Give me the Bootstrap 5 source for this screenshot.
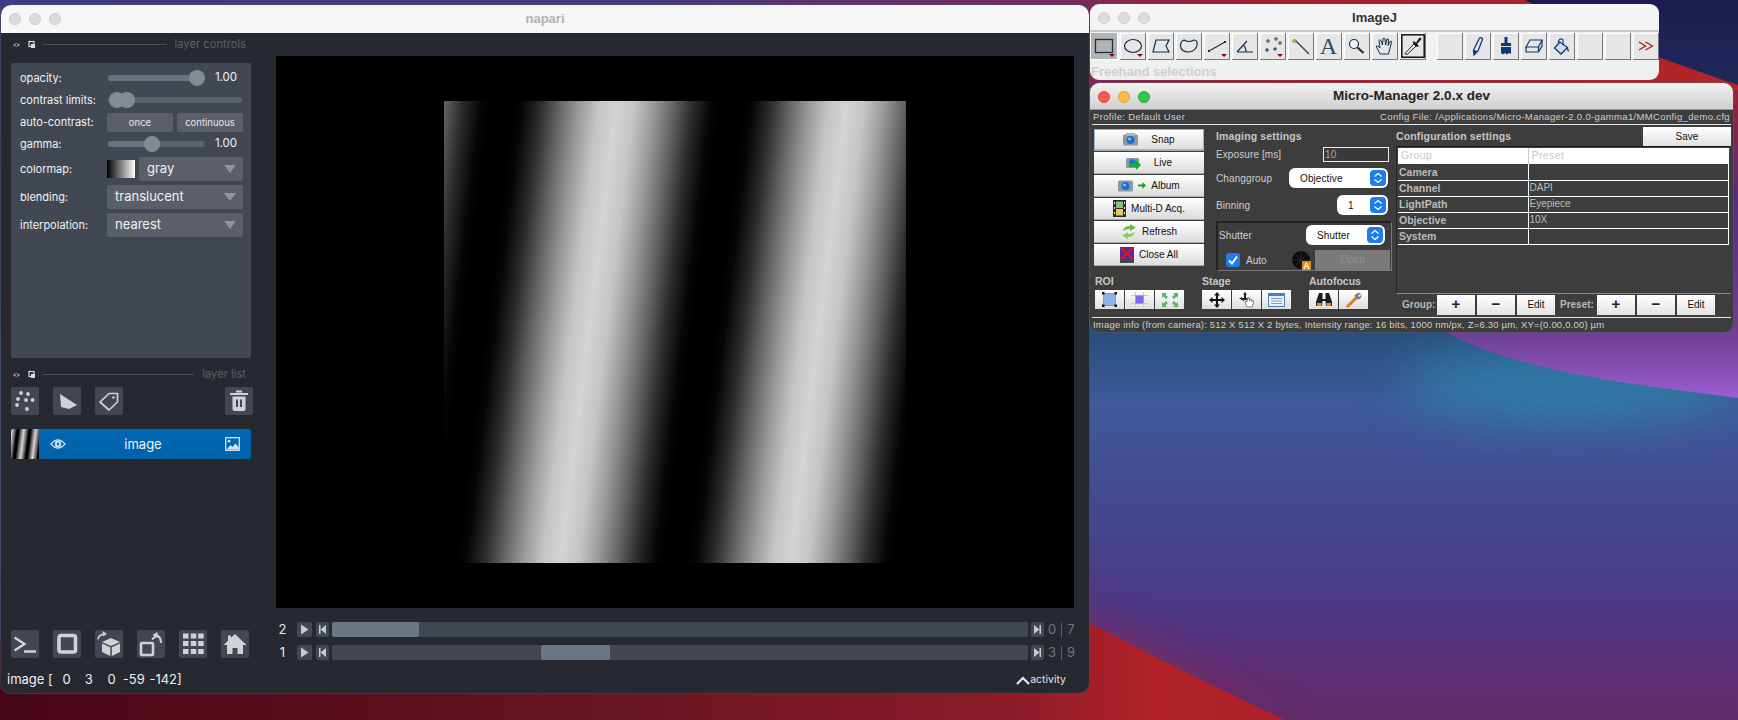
<!DOCTYPE html>
<html lang="en">
<head>
<meta charset="UTF-8">
<title>napari, ImageJ and Micro-Manager</title>
<link rel="stylesheet" href="https://cdn.jsdelivr.net/npm/bootstrap@5.3.0/dist/css/bootstrap.min.css">
<style>
html,body{margin:0;background:#222}
.desk{position:relative;width:1738px;height:720px;overflow:hidden}
.wall{position:absolute;left:0;top:0}
.win{position:absolute;overflow:hidden}
.lights{position:absolute;left:8px;top:8px;display:flex;gap:8px}
.lights i{display:block;width:12px;height:12px;border-radius:50%;background:#dcdcdc;border:1px solid #cbcbcb}
.lights.on i:nth-child(1){background:#fc5753;border-color:#df4744}
.lights.on i:nth-child(2){background:#fdbc40;border-color:#de9f34}
.lights.on i:nth-child(3){background:#33c748;border-color:#27aa35}

/* napari */
.np{left:1px;top:5px;width:1088px;height:688px;border-radius:10px;background:#262930;display:flex;flex-direction:column;font-family:Inter,"Noto Sans",sans-serif;color:#f0f1f2;box-shadow:0 0 0 1px rgba(70,75,80,.6)}
.np-title{position:relative;height:28px;flex:none;background:#f6f6f6;text-align:center;font:bold 13px/27px "Liberation Sans",sans-serif;color:#b2b2b2}
.np-body{height:631px;flex:none;display:flex}
.np-dock{width:275px;flex:none;display:flex;flex-direction:column;padding-bottom:6px}
.dock-head{height:30px;display:flex;align-items:center;padding:0 0 7px 11px;font-size:11.2px;color:#5b5f66}
.dock-head.lower{height:29px;padding:4px 0 0 11px}
.dock-head .rule{flex:1;height:1px;background:#4a4e55;margin:0 8px 0 7px}
.dock-head span{padding-right:30px}
.ctl-panel{margin-left:10px;width:240px;height:295px;background:#414851;border-radius:2px;padding:4px 8px 0 9px;display:grid;grid-template-columns:87px 136px;grid-template-rows:22px 22px 22px 22px 28px 28px 28px;align-items:center;font-size:11px}
.ctl-track{position:relative;height:6px;background:#5a626c;border-radius:3px;margin-left:1px}
.ctl-fill{position:absolute;left:0;top:0;height:6px;background:#6a7480;border-radius:3px}
.ctl-knob{position:absolute;top:-5px;width:16px;height:16px;margin-left:-8px;border-radius:50%;background:#838b93}
.ctl-val{width:38px;font-size:11.5px;text-align:center;padding-left:4px}
.ctl-btn{flex:1;height:19px;background:#5a5f68;border-radius:2px;font-size:9.5px;line-height:19px;text-align:center;color:#e6e7e8}
.ctl-combo{height:24px;background:#5a5f68;border-radius:2px;display:flex;align-items:center;font-size:13px;padding-left:8px;position:relative}
.ctl-combo::after{content:"";position:absolute;right:7px;top:8px;border-left:6px solid transparent;border-right:6px solid transparent;border-top:8px solid #8f959c}
.cmap{width:28px;height:18px;background:linear-gradient(90deg,#000,#fff)}
.np-btn{width:28px;height:28px;flex:none;background:#414851;border-radius:2px;display:block}
.layer-row{margin:14px 0 0 10px;width:240px;height:30px;display:flex;border-radius:2px;overflow:hidden;font-size:13px;color:#eef3f8}
.layer-thumb{width:28px;height:30px;flex:none;display:block}
.layer-main{flex:1;background:linear-gradient(#0068b4,#0062aa);display:flex;align-items:center;position:relative;justify-content:center;padding:2px 4px 0 0}
.np-center{flex:1;padding:23px 15px 0 0}
.np-canvas{display:block;width:798px;height:552px;background:#000}
.dim-row{display:flex;align-items:center;height:15px;font-size:13px;margin-top:8px}
.dim-row:first-of-type{margin-top:14px}
.dim-name{width:13px;text-align:center;color:#e6e7e8;margin-right:8px}
.dim-btn{height:15px;background:#414851;border-radius:2px;display:block;flex:none}
.dim-track{flex:1;height:15px;background:#414851;border-radius:2px;margin:0 3px;position:relative}
.dim-thumb{position:absolute;top:0;height:15px;background:#6a7683;border-radius:2px}
.dim-nums{width:26px;margin-left:4px;display:flex;align-items:center;color:#72767c;font-size:13px;gap:5px}
.dim-nums b{display:block;width:1px;height:14px;flex:none;background:#5e626a}
.np-status{flex:1;display:flex;align-items:center;padding:3px 23px 0 6px;font-size:13px;color:#f0f1f2}
.st-num{display:inline-block;text-align:right}
.np-activity{margin-left:auto;display:flex;align-items:center;font-size:10.5px;color:#e6e7e8}

/* ImageJ */
.ij{left:1090px;top:4px;width:569px;height:76px;border-radius:9px;background:linear-gradient(#f5f5f5,#efefef);font-family:"Liberation Sans",sans-serif}
.ij-title{position:relative;height:28px;border-bottom:2px solid #c9c9c9;text-align:center;font:bold 13px/27px "Liberation Sans",sans-serif;color:#333}
.ij-tools{display:flex;height:28px;padding:1px 0 0 2px;gap:2px}
.ij-tool{position:relative;width:26px;height:27px;flex:none;background:#e6e6e6;border-right:1px solid #777;border-bottom:1px solid #777;box-shadow:inset 1px 1px 0 #fff;display:flex;align-items:center;justify-content:center;font:24px/1 "Liberation Serif",serif;color:#2b4a68}
.ij-tool.sel{background:#b3b3b3;box-shadow:none;border-color:#fff;width:27px;margin-left:-1px}
.ij-tool.gapl{margin-left:9px}
.ij-tool.menu::after{content:"";position:absolute;right:2px;bottom:2px;border-left:3px solid transparent;border-right:3px solid transparent;border-top:3px solid #8a0010}
.ij-msg{padding:3px 0 0 1px;font:bold 13px/17px "Liberation Sans",sans-serif;color:#cfcfcf}

/* Micro-Manager */
.mm{left:1090px;top:83px;width:643px;height:249px;border-radius:9px;background:#3d3d3d;font-family:"Liberation Sans",sans-serif;color:#cfcfcf;font-size:10px;box-shadow:0 0 0 1px rgba(90,90,90,.5)}
.mm-title{position:relative;height:27px;background:linear-gradient(#f2f2f2,#cfcfcf);text-align:center;font:bold 13.5px/25px "Liberation Sans",sans-serif;color:#222;border-bottom:1px solid #999}
.mm-head{height:15px;margin:0 2px;display:flex;align-items:center;border-bottom:1px solid #e6e6e6;padding:0 1px;line-height:14px;font-size:9.5px;letter-spacing:.34px}
.mm-head span:last-child{margin-left:auto}
.mm-main{display:flex;gap:4px;padding:1px 0 0 4px}
.mm-left{width:298px;flex:none;padding-top:2px}
.mm-top{display:flex;gap:12px;height:145px}
.mm-actions{width:110px;flex:none;display:flex;flex-direction:column;gap:1px;padding-top:1px}
.mm-act{height:22px;background:linear-gradient(#fff,#dcdcdc);border-bottom:1px solid #aaa;display:flex;align-items:center;justify-content:center;gap:5px;color:#111;font-size:10px}
.mm-act.cur{box-shadow:inset 0 0 0 1px #8db7dc}
.mm-imaging{flex:1}
.mm-h{font-weight:bold;font-size:10.5px;color:#c8c8c8;letter-spacing:.15px}
.mm-line{display:flex;align-items:center;height:20px;letter-spacing:.1px}
.mm-input{margin-left:auto;margin-right:3px;width:66px;height:15px;border:1px solid #eee;background:#3a3a3a;color:#a8a8a8;line-height:13px;padding-left:1px;font-size:10px}
.mm-sel{margin-left:auto;height:20px;background:#fff;border-radius:6px;display:flex;align-items:center;color:#111;position:relative;padding-left:11px;font-size:10px}
.mm-step{position:absolute;right:2px;top:2px;width:16px;height:16px;display:block}
.mm-shut{border:1px solid #222;border-right-color:#777;border-bottom-color:#777;border-width:2px 1px 1px 2px;height:50px;margin-top:6px;width:176px;padding:2px 1px 0}
.mm-check{width:14px;height:14px;display:block;flex:none;margin-left:7px}
.mm-open{width:75px;height:20px;background:#7a7a7a;color:#909090;text-align:center;line-height:20px;font-size:10px}
.mm-tools{display:flex;gap:18px;padding-left:1px}
.mm-tgroup{width:90px;font-weight:bold;font-size:10.5px;line-height:17px;color:#c8c8c8}
.mm-tbtns{display:flex;gap:1px}
.mm-tbtn{width:29px;height:19px;background:linear-gradient(#fff,#dedede);display:flex;align-items:center;justify-content:center;flex:none}
.mm-right{width:335px;flex:none}
.mm-confhead{display:flex;align-items:center;height:19px;margin-top:1px}
.mm-save{margin-left:auto;width:88px;height:19px;background:linear-gradient(#fff,#e0e0e0);color:#111;text-align:center;line-height:19px;font-size:10px}
.mm-gridbox{height:148px;border-top:1px solid #1d1d1d;border-left:1px solid #262626;border-bottom:1px solid #8a8a8a;padding:1px 1px 0 1px}
.mm-grid{width:331px;border-collapse:collapse;table-layout:fixed;font-size:10px}
.mm-grid th{height:16px;background:#fff;color:#c9c9c9;font-weight:normal;font-size:10.5px;padding:0 3px;letter-spacing:.4px}
.mm-grid th+th{border-left:1px solid #ccc}
.mm-grid td{height:16px;padding:0 1px;border-bottom:1px solid #fff;line-height:14px;color:#bdbdbd}
.mm-grid td:first-child{font-weight:bold;font-size:10.5px;color:#bcbcbc}
.mm-grid td+td{border-left:1px solid #fff;border-right:1px solid #fff}
.mm-edits{display:flex;align-items:center;height:21px;padding-left:6px;gap:2px;font-weight:bold;font-size:10px;color:#b8b8b8}
.mm-edit{width:38px;height:20px;background:linear-gradient(#fff,#e2e2e2);color:#111;font-weight:normal;text-align:center;line-height:19px;flex:none}
.mm-edit.sym{font-size:15px;line-height:18px;font-weight:bold;color:#222}
.mm-info{margin:2px 2px 0;border-top:1px solid #e6e6e6;padding:0 1px;line-height:14px;font-size:9.5px;color:#cfcfcf;letter-spacing:.19px;white-space:nowrap}
</style>
</head>
<body>
<div class="desk">

<!-- wallpaper -->
<svg class="wall" width="1738" height="720" viewBox="0 0 1738 720">
  <defs>
    <linearGradient id="wBase" x1="0" y1="0" x2="0" y2="1">
      <stop offset="0" stop-color="#1d1c50"/><stop offset=".46" stop-color="#274f7a"/><stop offset=".56" stop-color="#3f5a9a"/><stop offset=".7" stop-color="#44498f"/><stop offset=".84" stop-color="#4c3a85"/><stop offset=".92" stop-color="#5a3078"/><stop offset="1" stop-color="#622c68"/>
    </linearGradient>
    <linearGradient id="wRed" gradientUnits="userSpaceOnUse" x1="0" y1="0" x2="1280" y2="0">
      <stop offset="0" stop-color="#470718"/><stop offset=".5" stop-color="#6a1522"/><stop offset=".8" stop-color="#8e1c28"/><stop offset=".9" stop-color="#b22228"/><stop offset="1" stop-color="#b02028"/>
    </linearGradient>
    <linearGradient id="wTop" x1="0" y1="0" x2="1" y2="0">
      <stop offset="0" stop-color="#3f3a86"/><stop offset=".35" stop-color="#443a84"/><stop offset=".62" stop-color="#7a2a5a"/><stop offset=".72" stop-color="#a22030"/><stop offset="1" stop-color="#b52428"/>
    </linearGradient>
    <linearGradient id="wPurple" gradientUnits="userSpaceOnUse" x1="0" y1="90" x2="0" y2="398">
      <stop offset="0" stop-color="#a02030"/><stop offset=".35" stop-color="#5a2a80"/><stop offset=".78" stop-color="#6a3f90"/><stop offset="1" stop-color="#9c5dd2"/>
    </linearGradient>
    <filter id="wSoft" x="-30%" y="-60%" width="160%" height="220%"><feGaussianBlur stdDeviation="24"/></filter>
  </defs>
  <rect width="1738" height="720" fill="url(#wBase)"/>
  <path d="M0,0H1525C1580,30 1650,55 1738,85V130H0Z" fill="url(#wTop)"/>
  <ellipse cx="1570" cy="385" rx="170" ry="38" fill="#2f80a8" opacity=".85" filter="url(#wSoft)"/>
  <path d="M1400,90H1738V398C1640,385 1530,375 1447,333Z" fill="url(#wPurple)"/>
  <path d="M1000,590L1087,622C1150,655 1220,690 1285,720H1000Z" fill="#a02048" opacity=".55" filter="url(#wSoft)"/>
  <path d="M0,640L1087,622C1150,655 1220,690 1285,720H0Z" fill="url(#wRed)"/>
</svg>

<!-- napari -->
<div class="win np">
  <div class="np-title"><div class="lights"><i></i><i></i><i></i></div>napari</div>
  <div class="np-body">
    <div class="np-dock">
      <div class="dock-head">
        <svg width="24" height="10" viewBox="0 0 24 10"><path d="M1 5Q4.500 1.500 8 5Q4.500 8.500 1 5Z" fill="#a8aaad"/><circle cx="4.500" cy="5" r="1.200" fill="#262930"/><rect x="17" y="1.500" width="5" height="5" fill="none" stroke="#dadbdc" stroke-width="1.200"/><rect x="19" y="4" width="4" height="4" fill="#dadbdc"/></svg>
        <div class="rule"></div><span>layer controls</span>
      </div>
      <div class="ctl-panel">
        <div>opacity:</div>
        <div class="d-flex align-items-center"><div class="ctl-track flex-grow-1"><div class="ctl-fill" style="width:92%"></div><div class="ctl-knob" style="left:92%"></div></div><div class="ctl-val">1.00</div></div>
        <div>contrast limits:</div>
        <div><div class="ctl-track" style="width:134px"><div class="ctl-knob" style="left:9px"></div><div class="ctl-knob" style="left:19px"></div></div></div>
        <div>auto-contrast:</div>
        <div class="d-flex gap-0"><div class="ctl-btn me-1">once</div><div class="ctl-btn">continuous</div></div>
        <div>gamma:</div>
        <div class="d-flex align-items-center"><div class="ctl-track flex-grow-1"><div class="ctl-fill" style="width:45%"></div><div class="ctl-knob" style="left:45%"></div></div><div class="ctl-val">1.00</div></div>
        <div>colormap:</div>
        <div class="d-flex align-items-center"><div class="cmap ms-0 me-1"></div><div class="ctl-combo flex-grow-1">gray</div></div>
        <div>blending:</div>
        <div class="ctl-combo">translucent</div>
        <div>interpolation:</div>
        <div class="ctl-combo">nearest</div>
      </div>

      <div class="dock-head lower">
        <svg width="24" height="10" viewBox="0 0 24 10"><path d="M1 5Q4.500 1.500 8 5Q4.500 8.500 1 5Z" fill="#a8aaad"/><circle cx="4.500" cy="5" r="1.200" fill="#262930"/><rect x="17" y="1.500" width="5" height="5" fill="none" stroke="#dadbdc" stroke-width="1.200"/><rect x="19" y="4" width="4" height="4" fill="#dadbdc"/></svg>
        <div class="rule"></div><span>layer list</span>
      </div>
      <div class="d-flex" style="padding-left:10px;gap:14px">
        <svg class="np-btn" viewBox="0 0 28 28"><g fill="#d1d2d4"><circle cx="10" cy="6" r="1.900"/><circle cx="17" cy="7" r="1.900"/><circle cx="7" cy="12" r="1.900"/><circle cx="15" cy="13" r="1.900"/><circle cx="21.500" cy="13" r="1.900"/><circle cx="6" cy="18" r="1.900"/><circle cx="16" cy="22" r="1.900"/></g></svg>
        <svg class="np-btn" viewBox="0 0 28 28"><path d="M7 7L24 18L16 22L8 20Z" fill="#d1d2d4"/></svg>
        <svg class="np-btn" viewBox="0 0 28 28"><path d="M5 15L14 6.500H22.500V15L14 23Z" fill="none" stroke="#d1d2d4" stroke-width="1.700" stroke-linejoin="round"/><circle cx="18.500" cy="10.500" r="1.200" fill="#d1d2d4"/></svg>
        <svg class="np-btn" viewBox="0 0 28 28" style="margin-left:88px"><path d="M11 4.500H17M5 7H23" stroke="#d1d2d4" stroke-width="2"/><path d="M7.500 9.500H20.500V22Q20.500 24 18.500 24H9.500Q7.500 24 7.500 22Z" fill="#d1d2d4"/><rect x="11" y="12.500" width="2" height="7.500" fill="#414851"/><rect x="15" y="12.500" width="2" height="7.500" fill="#414851"/></svg>
      </div>
      <div class="layer-row">
        <svg class="layer-thumb" viewBox="0 0 28 30"><defs><linearGradient id="thumbG" gradientUnits="userSpaceOnUse" x1="13" y1="0" x2="25" y2="0" spreadMethod="repeat" gradientTransform="skewX(-7)"><stop offset="0" stop-color="#d4d4d4"/><stop offset=".25" stop-color="#636363"/><stop offset=".42" stop-color="#000"/><stop offset=".58" stop-color="#000"/><stop offset=".75" stop-color="#636363"/><stop offset="1" stop-color="#d4d4d4"/></linearGradient></defs><rect width="28" height="30" fill="url(#thumbG)"/></svg>
        <div class="layer-main">
          <svg class="position-absolute" style="left:11px;top:8px" width="16" height="14" viewBox="0 0 16 14"><path d="M1 7Q8 -1 15 7Q8 15 1 7Z" fill="none" stroke="#c9dcec" stroke-width="1.300"/><circle cx="8" cy="7" r="3.200" fill="#c9dcec"/><circle cx="8" cy="7" r="1.200" fill="#0066b0"/></svg>
          image
          <svg class="position-absolute" style="right:11px;top:8px" width="15" height="14" viewBox="0 0 15 14"><rect x=".7" y=".7" width="13.600" height="12.600" fill="none" stroke="#d6e4f0" stroke-width="1.300"/><circle cx="4" cy="4.200" r="1.400" fill="#d6e4f0"/><path d="M1.500 12.500L5.500 8L7.500 10L10.500 6.500L13.500 10V12.500Z" fill="#d6e4f0"/></svg>
        </div>
      </div>

      <div class="d-flex mt-auto" style="padding-left:10px;gap:14px">
        <svg class="np-btn" viewBox="0 0 28 28"><path d="M3.500 7.500L13.500 14L3.500 20.500" fill="none" stroke="#d1d2d4" stroke-width="2.400"/><path d="M13 21.500H25" stroke="#d1d2d4" stroke-width="2.400"/></svg>
        <svg class="np-btn" viewBox="0 0 28 28"><rect x="6" y="5.500" width="16.500" height="16.500" rx="2" fill="none" stroke="#d1d2d4" stroke-width="3.600"/></svg>
        <svg class="np-btn" viewBox="0 0 28 28"><path d="M16 8L25 12L16 16L7 12Z" fill="#d1d2d4"/><path d="M7 13.500L15.300 17.200V26L7 22Z" fill="#d1d2d4"/><path d="M16.800 17.200L25 13.500V22L16.800 26Z" fill="#d1d2d4"/><path d="M3 9.500Q3.500 5 9 4" fill="none" stroke="#d1d2d4" stroke-width="1.500"/><path d="M7.500 1L12 4L8 6.500Z" fill="#d1d2d4"/></svg>
        <svg class="np-btn" viewBox="0 0 28 28"><rect x="4" y="13" width="12" height="12" rx="1" fill="none" stroke="#d1d2d4" stroke-width="2.600"/><path d="M15 9.500Q18.500 5.500 21 6Q23.500 7 24 13" fill="none" stroke="#d1d2d4" stroke-width="2"/><path d="M15.500 5L20.500 2L21 8Z" fill="#d1d2d4"/></svg>
        <svg class="np-btn" viewBox="0 0 28 28"><g fill="#d1d2d4"><rect x="4" y="3.500" width="5.500" height="5"/><rect x="11.800" y="3.500" width="5.500" height="5"/><rect x="19.200" y="3.500" width="5.500" height="5"/><rect x="4" y="11" width="5.500" height="5"/><rect x="11.800" y="11" width="5.500" height="5"/><rect x="19.200" y="11" width="5.500" height="5"/><rect x="4" y="19" width="5.500" height="5"/><rect x="11.800" y="19" width="5.500" height="5"/><rect x="19.200" y="19" width="5.500" height="5"/></g></svg>
        <svg class="np-btn" viewBox="0 0 28 28"><path d="M14 4L25.500 15H22V24H16.500V18H11.500V24H6V15H2.500L7 10.700V5.500H10V7.800Z" fill="#d1d2d4"/></svg>
      </div>
    </div>

    <div class="np-center">
      <svg class="np-canvas" viewBox="0 0 798 552">
        <defs>
          <linearGradient id="gratG" gradientUnits="userSpaceOnUse" x1="346.500" y1="0" x2="576.500" y2="0" spreadMethod="repeat" gradientTransform="skewX(-7)">
            <stop offset="0" stop-color="#d4d4d4"/><stop offset=".08" stop-color="#c4c4c4"/><stop offset=".16" stop-color="#9a9a9a"/><stop offset=".25" stop-color="#636363"/><stop offset=".33" stop-color="#2c2c2c"/><stop offset=".41" stop-color="#060606"/><stop offset=".45" stop-color="#000"/><stop offset=".55" stop-color="#000"/><stop offset=".59" stop-color="#060606"/><stop offset=".67" stop-color="#2c2c2c"/><stop offset=".75" stop-color="#636363"/><stop offset=".84" stop-color="#9a9a9a"/><stop offset=".92" stop-color="#c4c4c4"/><stop offset="1" stop-color="#d4d4d4"/>
          </linearGradient>
        </defs>
        <rect x="168" y="45" width="462" height="462" fill="url(#gratG)"/>
      </svg>
      <div class="dim-row">
        <div class="dim-name">2</div>
        <svg class="dim-btn" width="15" height="15" viewBox="0 0 15 15"><path d="M4 2.500L11.500 7.500L4 12.500Z" fill="#c9cbcd"/></svg>
        <svg class="dim-btn ms-1" width="13" height="15" viewBox="0 0 13 15"><path d="M3 3H4.500V12H3ZM10 3V12L4.500 7.500Z" fill="#c9cbcd"/></svg>
        <div class="dim-track"><div class="dim-thumb" style="left:0;width:87px"></div></div>
        <svg class="dim-btn" width="13" height="15" viewBox="0 0 13 15"><path d="M3 3V12L8.500 7.500ZM8.500 3H10V12H8.500Z" fill="#c9cbcd"/></svg>
        <div class="dim-nums"><span>0</span><b></b><span>7</span></div>
      </div>
      <div class="dim-row">
        <div class="dim-name">1</div>
        <svg class="dim-btn" width="15" height="15" viewBox="0 0 15 15"><path d="M4 2.500L11.500 7.500L4 12.500Z" fill="#c9cbcd"/></svg>
        <svg class="dim-btn ms-1" width="13" height="15" viewBox="0 0 13 15"><path d="M3 3H4.500V12H3ZM10 3V12L4.500 7.500Z" fill="#c9cbcd"/></svg>
        <div class="dim-track"><div class="dim-thumb" style="left:209px;width:69px"></div></div>
        <svg class="dim-btn" width="13" height="15" viewBox="0 0 13 15"><path d="M3 3V12L8.500 7.500ZM8.500 3H10V12H8.500Z" fill="#c9cbcd"/></svg>
        <div class="dim-nums"><span>3</span><b></b><span>9</span></div>
      </div>
    </div>
  </div>
  <div class="np-status"><span>image [<span class="st-num" style="width:18px">0</span><span class="st-num" style="width:22px">3</span><span class="st-num" style="width:23px">0</span><span class="st-num" style="width:29px">-59</span><span class="st-num" style="width:37px">-142]</span></span><div class="np-activity"><svg width="14" height="9" viewBox="0 0 14 9"><path d="M1 8L7 2L13 8" fill="none" stroke="#e6e7e8" stroke-width="2.200"/></svg>activity</div></div>
</div>

<!-- ImageJ -->
<div class="win ij">
  <div class="ij-title"><div class="lights"><i></i><i></i><i></i></div>ImageJ</div>
  <div class="ij-tools">
    <div class="ij-tool sel menu"><svg width="20" height="16" viewBox="0 0 20 16"><rect x="1.500" y="1.500" width="17" height="13" fill="none" stroke="#12304f" stroke-width="1.300"/></svg></div>
    <div class="ij-tool menu"><svg width="20" height="16" viewBox="0 0 20 16"><ellipse cx="10" cy="8" rx="8.500" ry="6.500" fill="none" stroke="#12304f" stroke-width="1.200"/></svg></div>
    <div class="ij-tool"><svg width="20" height="16" viewBox="0 0 20 16"><path d="M5 2H18L15 8L18 14H2Z" fill="none" stroke="#12304f" stroke-width="1.200"/></svg></div>
    <div class="ij-tool"><svg width="20" height="16" viewBox="0 0 20 16"><path d="M5 2Q10 5 15 2Q19 2 18 7Q17 13 10 14Q2 14 1.500 8Q1.500 3 5 2Z" fill="none" stroke="#12304f" stroke-width="1.200"/></svg></div>
    <div class="ij-tool menu"><svg width="20" height="16" viewBox="0 0 20 16"><path d="M2 13L18 4" stroke="#12304f" stroke-width="1.100"/><rect x="1" y="12" width="2" height="2" fill="#12304f"/><rect x="17" y="3" width="2" height="2" fill="#12304f"/></svg></div>
    <div class="ij-tool"><svg width="20" height="16" viewBox="0 0 20 16"><path d="M2 14H18M2 14L12 3M8 7Q11 9 11 14" fill="none" stroke="#12304f" stroke-width="1.200"/></svg></div>
    <div class="ij-tool menu"><svg width="22" height="18" viewBox="0 0 22 18"><g stroke="#12304f" stroke-width="1"><path d="M4 4H8M6 2V6M12 2H16M14 0V4M16 6H20M18 4V8M3 13H7M5 11V15M11 12H15M13 10V14"/></g><g fill="#ffe600"><rect x="5.500" y="3.500" width="1" height="1"/><rect x="13.500" y="1.500" width="1" height="1"/><rect x="17.500" y="5.500" width="1" height="1"/></g></svg></div>
    <div class="ij-tool"><svg width="20" height="18" viewBox="0 0 20 18"><path d="M5 4L18 17" stroke="#3b4a5a" stroke-width="1.500"/><path d="M3.500 2L4.200 3.300L5.500 4L4.200 4.700L3.500 6L2.800 4.700L1.500 4L2.800 3.300Z" fill="#e6d800" stroke="#333" stroke-width=".5"/></svg></div>
    <div class="ij-tool">A</div>
    <div class="ij-tool"><svg width="20" height="18" viewBox="0 0 20 18"><circle cx="7" cy="7" r="4.500" fill="#f4f4f4" stroke="#12304f" stroke-width="1.200"/><path d="M10.500 10.500L16.500 16" stroke="#12304f" stroke-width="2.200"/></svg></div>
    <div class="ij-tool"><svg width="20" height="20" viewBox="0 0 20 20"><path d="M5 18L1.500 11Q1 9.500 3 10L5 12L4 4.500Q4.500 3 6 4.500L7.500 9L8 2.500Q9.500 1.500 10 3L10.500 9L12 3Q13.500 2.500 13.500 4L13 9.500L15.500 5Q17 5 16.500 6.500L14.500 14L13.500 18Z" fill="none" stroke="#12304f" stroke-width="1"/></svg></div>
    <div class="ij-tool"><svg width="24" height="24" viewBox="0 0 24 24"><rect x=".8" y=".8" width="22.400" height="22.400" fill="none" stroke="#000" stroke-width="1.400"/><path d="M5 20L4 19.500L13 10L15 12L6 20.500Z" fill="#fff" stroke="#111" stroke-width="1"/><path d="M13 7L15 9L18 4Q20 3 20.500 5L16 10L18 12L16 13L11.500 8.500Z" fill="#111"/></svg></div>
    <div class="ij-tool gapl"></div>
    <div class="ij-tool"><svg width="14" height="20" viewBox="0 0 14 20"><path d="M8.500 2Q11 1 11.500 3.500L7 15L3 19L2.500 14Z" fill="#dfe6ee" stroke="#0a3a78" stroke-width="1.300"/><path d="M2.500 14L7 15L3 19Z" fill="#0a3a78"/></svg></div>
    <div class="ij-tool"><svg width="14" height="20" viewBox="0 0 14 20"><path d="M5.500 1H8.500V7H12V10H2V7H5.500Z" fill="#0a3a78"/><path d="M2 11H12V18L10 17L8 18.500L6 17L4 18.500L2 17Z" fill="#0a3a78"/></svg></div>
    <div class="ij-tool"><svg width="18" height="14" viewBox="0 0 18 14"><path d="M5 1H17L13.500 8H1Z" fill="none" stroke="#0a3a78" stroke-width="1.200"/><path d="M1 8V13H13.500L17 7V1M13.500 8V13" fill="none" stroke="#0a3a78" stroke-width="1.200"/></svg></div>
    <div class="ij-tool"><svg width="18" height="18" viewBox="0 0 18 18"><path d="M7 5L1.500 11L8 17L14.500 10.500Z" fill="#cfdcec" stroke="#0a3a78" stroke-width="1.300"/><path d="M5 6Q6 1 9 2Q11 3 9.500 8" fill="none" stroke="#0a3a78" stroke-width="1.100"/><path d="M14 10Q16.500 12 16 15Q13.500 14 14 10Z" fill="#0a3a78"/></svg></div>
    <div class="ij-tool"></div>
    <div class="ij-tool"></div>
    <div class="ij-tool"><svg width="16" height="12" viewBox="0 0 16 12"><path d="M1 2L7.500 6L1 10M7.500 2L14.500 6L7.500 10" fill="none" stroke="#b01818" stroke-width="1.300"/></svg></div>
  </div>
  <div class="ij-msg">Freehand selections</div>
</div>

<!-- Micro-Manager -->
<div class="win mm">
  <div class="mm-title"><div class="lights on"><i></i><i></i><i></i></div>Micro-Manager 2.0.x dev</div>
  <div class="mm-head"><span>Profile: Default User</span><span>Config File: /Applications/Micro-Manager-2.0.0-gamma1/MMConfig_demo.cfg</span></div>
  <div class="mm-main">
    <div class="mm-left">
      <div class="mm-top">
        <div class="mm-actions">
          <div class="mm-act cur"><svg width="15" height="13" viewBox="0 0 15 13"><rect y="1.500" width="15" height="11" rx="1.500" fill="#8b98a6"/><rect x="3" width="9" height="3" fill="#aab4be"/><circle cx="7.500" cy="7" r="4" fill="#1f6fd0"/><circle cx="6.500" cy="6" r="1.300" fill="#a8d0f8"/></svg><span class="ms-2">Snap</span></div>
          <div class="mm-act"><svg width="15" height="14" viewBox="0 0 15 14"><rect y="2" width="13" height="10" rx="1.500" fill="#8b98a6"/><circle cx="6.500" cy="6.500" r="3.300" fill="#1f6fd0"/><path d="M3 7H10V4L15 9L10 14V11H3Z" fill="#16b030"/></svg><span class="ms-2">Live</span></div>
          <div class="mm-act"><svg width="15" height="13" viewBox="0 0 15 13"><rect y="1.500" width="15" height="11" rx="1.500" fill="#8b98a6"/><circle cx="7.500" cy="7" r="4" fill="#1f6fd0"/><circle cx="6.500" cy="6" r="1.300" fill="#a8d0f8"/></svg><svg width="8" height="7" viewBox="0 0 8 7"><path d="M0 2.500H4.500V0L8 3.500L4.500 7V4.500H0Z" fill="#14a828"/></svg>Album</div>
          <div class="mm-act"><svg width="13" height="17" viewBox="0 0 13 17"><rect width="13" height="17" fill="#2a2a2a"/><rect x="3" y="1.500" width="7" height="6.500" fill="#7cc878"/><rect x="3" y="9" width="7" height="6.500" fill="#e8c860"/><g fill="#f0f0f0"><rect x="1" y="2" width="1" height="2"/><rect x="1" y="7" width="1" height="2"/><rect x="1" y="12" width="1" height="2"/><rect x="11" y="2" width="1" height="2"/><rect x="11" y="7" width="1" height="2"/><rect x="11" y="12" width="1" height="2"/></g></svg>Multi-D Acq.</div>
          <div class="mm-act"><svg width="16" height="15" viewBox="0 0 16 15"><path d="M2 7Q3 2 9 2V0L15 3.500L9 7V5Q5 5 2 7Z" fill="#6cb84a"/><path d="M14 8Q13 13 7 13V15L1 11.500L7 8V10Q11 10 14 8Z" fill="#8ccc68"/></svg>Refresh</div>
          <div class="mm-act"><svg width="14" height="16" viewBox="0 0 14 16"><rect width="14" height="16" fill="#5a2a9a"/><rect y="12" width="14" height="4" fill="#444"/><path d="M1 1L13 12M13 1L1 12" stroke="#e01818" stroke-width="2"/></svg>Close All</div>
        </div>
        <div class="mm-imaging">
          <div class="mm-h" style="height:19px;line-height:17px">Imaging settings</div>
          <div class="mm-line" style="height:15px">Exposure [ms]<div class="mm-input">10</div></div>
          <div class="mm-line" style="margin-top:6px">Changgroup<div class="mm-sel me-1" style="width:99px">Objective<svg class="mm-step" viewBox="0 0 16 16"><rect width="16" height="16" rx="4" fill="#1c7cf0"/><path d="M4.500 6.500L8 3.500L11.500 6.500M4.500 9.500L8 12.500L11.500 9.500" fill="none" stroke="#fff" stroke-width="1.300"/></svg></div></div>
          <div class="mm-line" style="margin-top:7px">Binning<div class="mm-sel me-1" style="width:51px">1<svg class="mm-step" viewBox="0 0 16 16"><rect width="16" height="16" rx="4" fill="#1c7cf0"/><path d="M4.500 6.500L8 3.500L11.500 6.500M4.500 9.500L8 12.500L11.500 9.500" fill="none" stroke="#fff" stroke-width="1.300"/></svg></div></div>
          <div class="mm-shut">
            <div class="mm-line">Shutter<div class="mm-sel" style="width:79px;margin-right:5px">Shutter<svg class="mm-step" viewBox="0 0 16 16"><rect width="16" height="16" rx="4" fill="#1c7cf0"/><path d="M4.500 6.500L8 3.500L11.500 6.500M4.500 9.500L8 12.500L11.500 9.500" fill="none" stroke="#fff" stroke-width="1.300"/></svg></div></div>
            <div class="d-flex align-items-center" style="margin-top:5px;height:20px">
              <svg class="mm-check" viewBox="0 0 14 14"><rect width="14" height="14" rx="3" fill="#1c7cf0"/><path d="M3 7.500L6 10.500L11 3.500" fill="none" stroke="#fff" stroke-width="2"/></svg>
              <span style="margin-left:6px">Auto</span>
              <svg class="ms-auto" style="margin-right:4px" width="19" height="19" viewBox="0 0 19 19"><circle cx="9" cy="9" r="9" fill="#0a0a0a"/><path d="M9 0V18M0 9H18M3 3L15 15M15 3L3 15" stroke="#3a3a3a" stroke-width=".6"/><rect x="10" y="10" width="9" height="9" fill="#e88a10"/><text x="14.500" y="17.800" text-anchor="middle" font-size="9" font-weight="bold" font-family="Liberation Sans, sans-serif" fill="#fff">A</text></svg>
              <div class="mm-open">Open</div>
            </div>
          </div>
        </div>
      </div>
      <div class="mm-tools">
        <div class="mm-tgroup">ROI
          <div class="mm-tbtns">
            <div class="mm-tbtn"><svg width="15" height="15" viewBox="0 0 15 15"><rect x="1.500" y="1.500" width="12" height="12" fill="#8cb4e8" stroke="#5a7cb0" stroke-width=".6"/><g fill="#111"><rect width="2.500" height="2.500"/><rect x="12.500" width="2.500" height="2.500"/><rect y="12.500" width="2.500" height="2.500"/><rect x="12.500" y="12.500" width="2.500" height="2.500"/></g></svg></div>
            <div class="mm-tbtn"><svg width="17" height="15" viewBox="0 0 17 15"><path d="M0 3.500H17M0 11.500H17M4.500 0V15M12.500 0V15" stroke="#bdbdbd" stroke-width=".8"/><rect x="4.500" y="3.500" width="8" height="8" fill="#7a6cf0"/></svg></div>
            <div class="mm-tbtn"><svg width="16" height="14" viewBox="0 0 16 14"><g fill="#58b868"><path d="M0 0H5L3.500 1.500L6 4L4 6L1.500 3.500L0 5Z"/><path d="M16 0V5L14.500 3.500L12 6L10 4L12.500 1.500L11 0Z"/><path d="M0 14V9L1.500 10.500L4 8L6 10L3.500 12.500L5 14Z"/><path d="M16 14H11L12.500 12.500L10 10L12 8L14.500 10.500L16 9Z"/></g></svg></div>
          </div>
        </div>
        <div class="mm-tgroup">Stage
          <div class="mm-tbtns">
            <div class="mm-tbtn"><svg width="16" height="16" viewBox="0 0 16 16"><path d="M8 0L11 3.500H9V7H12.500V5L16 8L12.500 11V9H9V12.500H11L8 16L5 12.500H7V9H3.500V11L0 8L3.500 5V7H7V3.500H5Z" fill="#111"/></svg></div>
            <div class="mm-tbtn"><svg width="16" height="16" viewBox="0 0 16 16"><path d="M6 0L8 2.500H7V6H9V5L11 7L9 9V8H5V9L0 6.500L3 5V6H5V2.500H4Z" fill="#222"/><path d="M8 15L6 10Q6 8.500 7.500 9.500L8 10L8.500 6Q9.500 5.500 10 6.500L10.500 9L12 7Q13 7 13 8L12.500 10L14 8.500Q15 9 14.500 10.500L13 15Z" fill="#fff" stroke="#555" stroke-width=".7"/></svg></div>
            <div class="mm-tbtn"><svg width="17" height="14" viewBox="0 0 17 14"><rect x=".5" y=".5" width="16" height="13" fill="#eef3fb" stroke="#4a7cc0"/><rect x=".5" y=".5" width="16" height="2.500" fill="#4a7cc0"/><path d="M3 5.500H14M3 8H14M3 10.500H14" stroke="#7a9ccc"/></svg></div>
          </div>
        </div>
        <div class="mm-tgroup">Autofocus
          <div class="mm-tbtns">
            <div class="mm-tbtn"><svg width="16" height="14" viewBox="0 0 16 14"><path d="M3 0H6.500V6H9.500V0H13L16 9V13H10L9.500 8H6.500L6 13H0V9Z" fill="#1d1d1d"/><path d="M1 10H5.500V13H1ZM10.500 10H15V13H10.500Z" fill="#e8901c"/></svg></div>
            <div class="mm-tbtn"><svg width="16" height="16" viewBox="0 0 16 16"><path d="M1 15L10 6" stroke="#e07a18" stroke-width="2.800"/><path d="M9.500 7L8.500 3.500Q11 0 15 1L12 4L13 5L15.500 2.500Q16 6 12.500 7.500Z" fill="#7c8088"/></svg></div>
          </div>
        </div>
      </div>
    </div>
    <div class="mm-right">
      <div class="mm-confhead"><span class="mm-h">Configuration settings</span><div class="mm-save">Save</div></div>
      <div class="mm-gridbox">
        <table class="mm-grid">
          <colgroup><col style="width:130px"><col></colgroup>
          <tr><th>Group</th><th>Preset</th></tr>
          <tr><td>Camera</td><td></td></tr>
          <tr><td>Channel</td><td>DAPI</td></tr>
          <tr><td>LightPath</td><td>Eyepiece</td></tr>
          <tr><td>Objective</td><td>10X</td></tr>
          <tr><td>System</td><td></td></tr>
        </table>
      </div>
      <div class="mm-edits">
        <span style="width:33px">Group:</span><div class="mm-edit sym">+</div><div class="mm-edit sym">−</div><div class="mm-edit">Edit</div>
        <span style="width:35px;margin-left:3px">Preset:</span><div class="mm-edit sym">+</div><div class="mm-edit sym">−</div><div class="mm-edit">Edit</div>
      </div>
    </div>
  </div>
  <div class="mm-info">Image info (from camera): 512 X 512 X 2 bytes, Intensity range: 16 bits, 1000 nm/px, Z=6.30 µm, XY=(0.00,0.00) µm</div>
</div>

</div>
<script src="https://cdn.jsdelivr.net/npm/bootstrap@5.3.0/dist/js/bootstrap.bundle.min.js"></script>
</body>
</html>
